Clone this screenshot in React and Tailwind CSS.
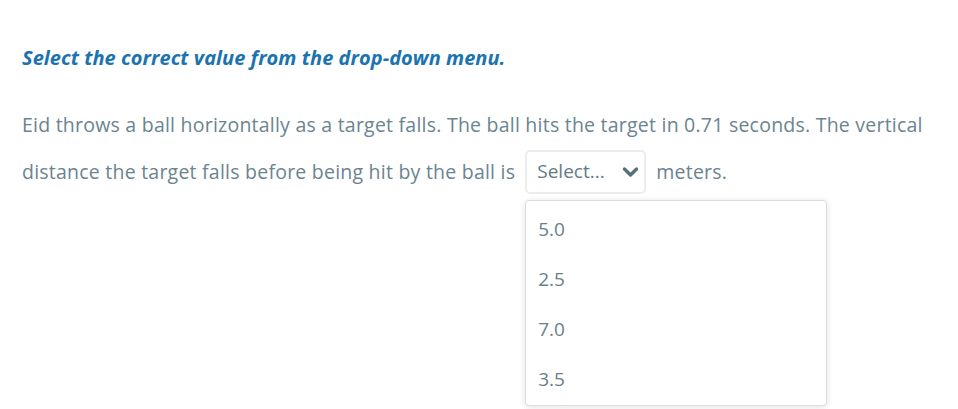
import React from 'react';

const options = ['5.0', '2.5', '7.0', '3.5'];

function Chevron() {
    return (
        <svg width="17" height="12" viewBox="0 0 17 12">
            <path d="M2.5 3 L8.5 9 L14.5 3" fill="none" stroke="#56707c" strokeWidth="3.4" strokeLinecap="round" strokeLinejoin="round" />
        </svg>
    );
}

export default function App() {
    return (
        <div className="bg-white w-[958px] h-[409px] overflow-hidden text-[#6a8490] font-['Open_Sans',sans-serif]">
            <div className="pl-[22px] pt-[44px]">
                <h2 className="text-[20px] font-bold italic text-[#1b73b0] leading-[28px] tracking-[0.05px]">
                    Select the correct value from the drop-down menu.
                </h2>
                <div className="mt-[29px] text-[19.5px] leading-[47px] tracking-[0.23px]">
                    <p>Eid throws a ball horizontally as a target falls. The ball hits the target in 0.71 seconds. The vertical</p>
                    <p className="flex items-center">
                        <span>distance the target falls before being hit by the ball is</span>
                        <span className="relative ml-[10px] mr-[10px] tracking-normal">
                            <span className="flex items-center justify-between h-[44px] w-[121px] pl-[10px] pr-[5px] border-2 border-[#ececec] rounded-[5px] text-[#617b87] text-[19px]">
                                Select...
                                <Chevron />
                            </span>
                            <div className="absolute left-0 top-[50px] w-[302px] h-[206px] bg-white border border-[#dcdcdc] rounded-[4px] shadow-[0_1px_6px_rgba(0,0,0,0.12)] py-[4px]">
                                {options.map((o) => (
                                    <div key={o} className="h-[50px] flex items-center px-[12px] text-[19px] text-[#687f89]">
                                        {o}
                                    </div>
                                ))}
                            </div>
                        </span>
                        <span>meters.</span>
                    </p>
                </div>
            </div>
        </div>
    );
}
